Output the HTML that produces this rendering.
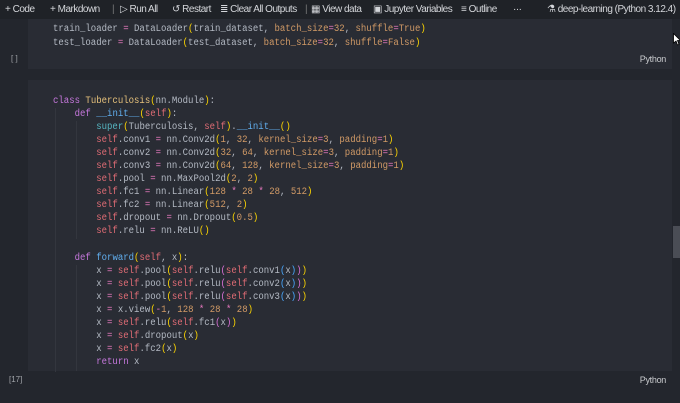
<!DOCTYPE html>
<html><head><meta charset="utf-8"><style>
body{margin:0;width:680px;height:403px;background:#23262d;overflow:hidden;position:relative;font-family:"Liberation Sans",sans-serif}
.tb{position:absolute;left:0;top:0;width:680px;height:19px;background:#1f2227;color:#d4d6da;font-size:10px;letter-spacing:-0.5px}
.tb span{position:absolute;top:4px;white-space:nowrap}
.ed{position:absolute;left:28px;background:#292c34}
.code{position:absolute;font-family:"Liberation Mono",monospace;font-size:10px;line-height:13.05px;color:#b4bac4;white-space:pre;transform:scaleX(0.9);transform-origin:0 0}
.k{color:#c678dd}.c{color:#e5c07b}.f{color:#61afef}.s{color:#e06c75}.n{color:#d19a66}.o{color:#e879c0}.y{color:#ffd700}.p{color:#da70d6}.b{color:#4aa8ff}.pr{color:#d19a66}.cy{color:#56b6c2}
.lab{position:absolute;font-size:8px;color:#a0a3a8}
.py{position:absolute;right:14px;font-size:9px;color:#c8cacd;letter-spacing:-0.3px}
.guide{position:absolute;width:1px;background:#33363e}
</style></head><body>
<div class="tb">
<span style="left:5px">+ Code</span>
<span style="left:50px">+ Markdown</span>
<span style="left:112px;color:#777">|</span>
<span style="left:120px">▷ Run All</span>
<span style="left:172px">↺ Restart</span>
<span style="left:220px">≣ Clear All Outputs</span>
<span style="left:305px;color:#777">|</span>
<span style="left:311px">▦ View data</span>
<span style="left:373px">▣ Jupyter Variables</span>
<span style="left:461px">≡ Outline</span>
<span style="left:513px">···</span>
<span style="left:547px">⚗ deep-learning (Python 3.12.4)</span>
</div>
<div class="ed" style="top:19px;height:50px;width:644px"></div>
<div class="code" style="left:53px;top:23px;line-height:14px">train_loader <span class="o">=</span> DataLoader<span class="y">(</span>train_dataset, <span class="pr">batch_size</span><span class="o">=</span><span class="n">32</span>, <span class="pr">shuffle</span><span class="o">=</span><span class="n">True</span><span class="y">)</span>
test_loader <span class="o">=</span> DataLoader<span class="y">(</span>test_dataset, <span class="pr">batch_size</span><span class="o">=</span><span class="n">32</span>, <span class="pr">shuffle</span><span class="o">=</span><span class="n">False</span><span class="y">)</span></div>
<div class="lab" style="left:11px;top:54px">[ ]</div>
<div class="py" style="top:54px">Python</div>
<div class="ed" style="top:80px;height:291px;width:644px"></div>
<div class="guide" style="left:55px;top:108px;height:264px"></div>
<div class="guide" style="left:76px;top:121px;height:118px"></div>
<div class="guide" style="left:76px;top:265px;height:106px"></div>
<div class="code" style="left:53px;top:95px"><span class="k">class</span> <span class="c">Tuberculosis</span><span class="y">(</span>nn.Module<span class="y">)</span>:
    <span class="k">def</span> <span class="f">__init__</span><span class="y">(</span><span class="s">self</span><span class="y">)</span>:
        <span class="cy">super</span><span class="y">(</span>Tuberculosis, <span class="s">self</span><span class="y">)</span>.<span class="f">__init__</span><span class="y">()</span>
        <span class="s">self</span>.conv1 <span class="o">=</span> nn.Conv2d<span class="y">(</span><span class="n">1</span>, <span class="n">32</span>, <span class="pr">kernel_size</span><span class="o">=</span><span class="n">3</span>, <span class="pr">padding</span><span class="o">=</span><span class="n">1</span><span class="y">)</span>
        <span class="s">self</span>.conv2 <span class="o">=</span> nn.Conv2d<span class="y">(</span><span class="n">32</span>, <span class="n">64</span>, <span class="pr">kernel_size</span><span class="o">=</span><span class="n">3</span>, <span class="pr">padding</span><span class="o">=</span><span class="n">1</span><span class="y">)</span>
        <span class="s">self</span>.conv3 <span class="o">=</span> nn.Conv2d<span class="y">(</span><span class="n">64</span>, <span class="n">128</span>, <span class="pr">kernel_size</span><span class="o">=</span><span class="n">3</span>, <span class="pr">padding</span><span class="o">=</span><span class="n">1</span><span class="y">)</span>
        <span class="s">self</span>.pool <span class="o">=</span> nn.MaxPool2d<span class="y">(</span><span class="n">2</span>, <span class="n">2</span><span class="y">)</span>
        <span class="s">self</span>.fc1 <span class="o">=</span> nn.Linear<span class="y">(</span><span class="n">128</span> <span class="o">*</span> <span class="n">28</span> <span class="o">*</span> <span class="n">28</span>, <span class="n">512</span><span class="y">)</span>
        <span class="s">self</span>.fc2 <span class="o">=</span> nn.Linear<span class="y">(</span><span class="n">512</span>, <span class="n">2</span><span class="y">)</span>
        <span class="s">self</span>.dropout <span class="o">=</span> nn.Dropout<span class="y">(</span><span class="n">0.5</span><span class="y">)</span>
        <span class="s">self</span>.relu <span class="o">=</span> nn.ReLU<span class="y">()</span>

    <span class="k">def</span> <span class="f">forward</span><span class="y">(</span><span class="s">self</span>, x<span class="y">)</span>:
        x <span class="o">=</span> <span class="s">self</span>.pool<span class="y">(</span><span class="s">self</span>.relu<span class="p">(</span><span class="s">self</span>.conv1<span class="b">(</span>x<span class="b">)</span><span class="p">)</span><span class="y">)</span>
        x <span class="o">=</span> <span class="s">self</span>.pool<span class="y">(</span><span class="s">self</span>.relu<span class="p">(</span><span class="s">self</span>.conv2<span class="b">(</span>x<span class="b">)</span><span class="p">)</span><span class="y">)</span>
        x <span class="o">=</span> <span class="s">self</span>.pool<span class="y">(</span><span class="s">self</span>.relu<span class="p">(</span><span class="s">self</span>.conv3<span class="b">(</span>x<span class="b">)</span><span class="p">)</span><span class="y">)</span>
        x <span class="o">=</span> x.view<span class="y">(</span><span class="o">-</span><span class="n">1</span>, <span class="n">128</span> <span class="o">*</span> <span class="n">28</span> <span class="o">*</span> <span class="n">28</span><span class="y">)</span>
        x <span class="o">=</span> <span class="s">self</span>.relu<span class="y">(</span><span class="s">self</span>.fc1<span class="p">(</span>x<span class="p">)</span><span class="y">)</span>
        x <span class="o">=</span> <span class="s">self</span>.dropout<span class="y">(</span>x<span class="y">)</span>
        x <span class="o">=</span> <span class="s">self</span>.fc2<span class="y">(</span>x<span class="y">)</span>
        <span class="k">return</span> x</div>
<div class="lab" style="left:9px;top:375px">[17]</div>
<div class="py" style="top:375px">Python</div>
<div style="position:absolute;left:673px;top:226px;width:7px;height:32px;background:#4a4d55"></div>
<svg style="position:absolute;left:673px;top:33px" width="8" height="13" viewBox="0 0 8 13"><path d="M0.5 0.5 L0.5 10 L3 8 L4.5 12 L6 11.3 L4.5 7.5 L7.5 7.5 Z" fill="#fff" stroke="#000" stroke-width="0.8"/></svg>
</body></html>
